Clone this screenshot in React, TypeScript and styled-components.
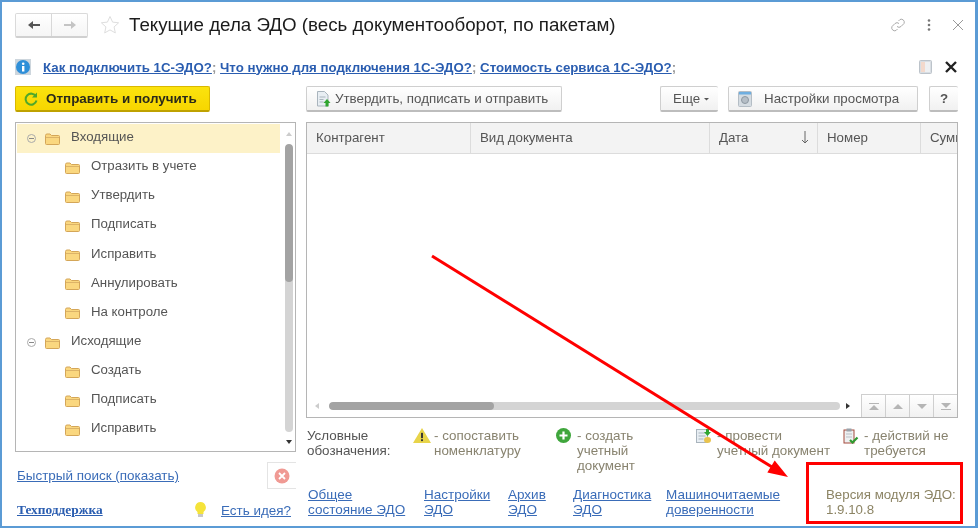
import React from 'react';
import styled, { createGlobalStyle } from 'styled-components';

const Global = createGlobalStyle`
  html, body { margin: 0; padding: 0; background: #fff; }
  body { font-family: "Liberation Sans", Arial, sans-serif; font-size: 13.3px; color: #4a4a4a; overflow: hidden; }
`;

const Frame = styled.div`
  position: relative;
  box-sizing: border-box;
  width: 978px;
  height: 528px;
  border: 2px solid #5b9bd5;
  border-right-width: 3px;
  padding: 10px 0 0 13px;
  overflow: hidden;
  background: #fff;
  filter: blur(0.3px);
`;

const TitleRow = styled.div`
  display: flex;
  align-items: center;
  height: 26px;
  width: 949px;
`;
const NavGroup = styled.div`
  display: flex;
  width: 73px;
  height: 25px;
  box-sizing: border-box;
  border: 1px solid #dadada;
  border-bottom: 2px solid #d0d0d0;
  border-radius: 2px;
  background: linear-gradient(#fff, #f5f5f5);
`;
const NavBtn = styled.div<{ $split?: boolean }>`
  flex: 1;
  display: flex;
  align-items: center;
  justify-content: center;
  border-right: ${(p) => (p.$split ? '1px solid #d8d8d8' : 'none')};
`;
const Title = styled.div`
  font-size: 18.75px;
  color: #1c1c1c;
  margin-left: 9px;
  white-space: nowrap;
`;
const StarWrap = styled.div`
  margin-left: 12px;
  display: flex;
`;
const TitleIcons = styled.div`
  margin-left: auto;
  display: flex;
  align-items: center;
  gap: 21px;
`;

const InfoRow = styled.div`
  display: flex;
  align-items: center;
  height: 20px;
  margin-top: 19px;
  width: 942px;
`;
const InfoLinks = styled.div`
  margin-left: 12px;
  font-size: 13.28px;
  font-weight: bold;
  color: #999;
  white-space: nowrap;
`;
const InfoLink = styled.a`
  color: #2a5db0;
  text-decoration: underline;
`;
const InfoRight = styled.div`
  margin-left: auto;
  display: flex;
  align-items: center;
  gap: 13px;
`;

const Columns = styled.div`
  display: flex;
  margin-top: 9px;
`;
const LeftCol = styled.div`
  width: 281px;
  margin-right: 10px;
  flex: none;
`;
const RightCol = styled.div`
  width: 652px;
  flex: none;
`;

const Button = styled.div<{ $w: number }>`
  box-sizing: border-box;
  width: ${(p) => p.$w}px;
  height: 26px;
  display: flex;
  align-items: center;
  border: 1px solid #cfcfcf;
  border-bottom: 2px solid #bdbdbd;
  border-radius: 2px;
  background: linear-gradient(#fff, #f1f1f1);
  color: #555;
  font-size: 13.35px;
  white-space: nowrap;
  flex: none;
`;
const PrimaryButton = styled(Button)`
  background: linear-gradient(#fbe30e, #f7d600);
  border-color: #d9b800;
  border-bottom-color: #bfa200;
  color: #2b2b1a;
  font-weight: bold;
  font-size: 13.45px;
  padding-left: 8px;
  gap: 8px;
`;
const Toolbar = styled.div`
  display: flex;
  height: 26px;
  margin-bottom: 10px;
`;
const ToolButton = styled(Button)<{ $ml?: number; $open?: boolean }>`
  margin-left: ${(p) => p.$ml ?? 0}px;
  padding-left: 9px;
  gap: 4px;
  border-right: ${(p) => (p.$open ? 'none' : '1px solid #cfcfcf')};
`;
const MoreButton = styled(ToolButton)`
  padding-left: 12px;
`;
const ViewButton = styled(ToolButton)`
  gap: 12px;
`;
const HelpButton = styled(ToolButton)`
  justify-content: center;
  padding-left: 0;
  font-weight: bold;
`;

const TreeBox = styled.div`
  position: relative;
  box-sizing: border-box;
  height: 330px;
  border: 1px solid #b5b5b5;
  padding: 1px 1px 0;
  overflow: hidden;
`;
const TreeRow = styled.div<{ $sel?: boolean; $child?: boolean }>`
  display: flex;
  align-items: center;
  box-sizing: border-box;
  width: 263px;
  height: 29.15px;
  padding-left: ${(p) => (p.$child ? '48px' : '10px')};
  background: ${(p) => (p.$sel ? '#fdf2c8' : 'transparent')};
  font-size: 13.25px;
  color: #555;
`;
const Collapse = styled.span`
  box-sizing: border-box;
  width: 9px;
  height: 9px;
  margin-right: 9px;
  border: 1px solid #aaa;
  border-radius: 50%;
  display: flex;
  align-items: center;
  justify-content: center;
  &::after { content: ''; width: 5px; height: 1px; background: #888; }
`;
const TreeLabel = styled.span`
  margin: -4px 0 0 11px;
`;
const VScroll = styled.div`
  position: absolute;
  top: 0;
  right: 2px;
  bottom: 0;
  width: 9px;
  display: flex;
  flex-direction: column;
  align-items: center;
`;
const ArrowUp = styled.div`
  width: 0; height: 0;
  border-left: 3px solid transparent;
  border-right: 3px solid transparent;
  border-bottom: 4px solid #ccc;
`;
const ArrowDown = styled.div`
  width: 0; height: 0;
  border-left: 3px solid transparent;
  border-right: 3px solid transparent;
  border-top: 4px solid #333;
`;
const VTrack = styled.div`
  width: 8px;
  height: 288px;
  margin: 6px 0 8px;
  border-radius: 4px;
  background: #d4d4d4;
  overflow: hidden;
`;
const VThumb = styled.div`
  height: 138px;
  background: #a3a3a3;
  border-radius: 4px;
`;
const VTop = styled.div`
  height: 8px;
  display: flex;
  align-items: center;
  margin-top: 7px;
`;

const SearchRow = styled.div`
  display: flex;
  align-items: center;
  justify-content: space-between;
  height: 27px;
  margin-top: 10px;
`;
const PlainLink = styled.a`
  color: #3a6cb8;
  text-decoration: underline;
  font-size: 13.45px;
`;
const SearchLink = styled(PlainLink)`
  margin: 0 0 1px 2px;
`;
const ClearBtn = styled.div`
  box-sizing: border-box;
  width: 29px;
  height: 27px;
  display: flex;
  align-items: center;
  justify-content: center;
  border: 1px solid #e4e4e4;
  border-right: none;
  background: #fff;
`;
const SupportRow = styled.div`
  display: flex;
  align-items: center;
  height: 20px;
  margin-top: 11px;
`;
const SupportLink = styled.a`
  font-family: "Liberation Serif", "Times New Roman", serif;
  font-weight: bold;
  font-size: 13.4px;
  color: #2a5db0;
  text-decoration: underline;
  margin-left: 2px;
`;
const IdeaGroup = styled.div`
  margin-left: auto;
  display: flex;
  align-items: center;
  gap: 14px;
  margin-right: 5px;
`;

const Grid = styled.div`
  box-sizing: border-box;
  height: 296px;
  border: 1px solid #b5b5b5;
  display: flex;
  flex-direction: column;
  overflow: hidden;
`;
const GridHead = styled.div`
  display: flex;
  height: 30px;
  flex: none;
  background: #f3f3f3;
  border-bottom: 1px solid #dcdcdc;
`;
const HeadCell = styled.div<{ $w: number }>`
  box-sizing: border-box;
  width: ${(p) => p.$w}px;
  flex: none;
  display: flex;
  align-items: center;
  justify-content: space-between;
  padding: 0 8px 2px 9px;
  border-right: 1px solid #dcdcdc;
  font-size: 13.3px;
  color: #555;
  white-space: nowrap;
  overflow: hidden;
  &:last-child { border-right: none; padding-right: 0; }
`;
const GridBody = styled.div`
  flex: 1;
`;
const GridFoot = styled.div`
  display: flex;
  align-items: center;
  height: 23px;
  flex: none;
  padding-left: 8px;
`;
const ArrowLeft = styled.div`
  width: 0; height: 0;
  border-top: 3px solid transparent;
  border-bottom: 3px solid transparent;
  border-right: 4px solid #ccc;
`;
const ArrowRight = styled.div`
  width: 0; height: 0;
  border-top: 3px solid transparent;
  border-bottom: 3px solid transparent;
  border-left: 4px solid #333;
  margin-left: 6px;
`;
const HTrack = styled.div`
  width: 511px;
  height: 8px;
  margin-left: 10px;
  border-radius: 4px;
  background: #d4d4d4;
  overflow: hidden;
`;
const HThumb = styled.div`
  width: 165px;
  height: 100%;
  background: #a3a3a3;
  border-radius: 4px;
`;
const PageBtns = styled.div`
  display: flex;
  margin-left: auto;
  height: 100%;
  box-sizing: border-box;
  border-top: 1px solid #cfcfcf;
`;
const PageBtn = styled.div`
  box-sizing: border-box;
  width: 24px;
  display: flex;
  flex-direction: column;
  align-items: center;
  justify-content: center;
  gap: 1px;
  border-left: 1px solid #cfcfcf;
  background: linear-gradient(#fff, #f1f1f1);
`;
const ArrowDownSoft = styled.div`
  width: 0; height: 0;
  border-left: 5px solid transparent;
  border-right: 5px solid transparent;
  border-top: 5px solid #b5b5b5;
`;
const ArrowUpSoft = styled.div`
  width: 0; height: 0;
  border-left: 5px solid transparent;
  border-right: 5px solid transparent;
  border-bottom: 5px solid #b5b5b5;
`;
const Dash = styled.div`
  width: 10px;
  height: 1px;
  background: #b5b5b5;
`;

const Legend = styled.div`
  display: grid;
  grid-template-columns: 106px 143px 140px 147px 1fr;
  height: 64px;
  padding: 10px 0 0 1px;
  box-sizing: border-box;
  line-height: 15px;
  font-size: 13.4px;
`;
const LegendTitle = styled.div`
  color: #555;
`;
const LegendItem = styled.div`
  display: flex;
  align-items: flex-start;
  gap: 3px;
  color: #88836f;
`;
const LegendIcon = styled.div`
  flex: none;
  width: 18px;
  display: flex;
  justify-content: flex-start;
`;

const LinksRow = styled.div`
  display: grid;
  grid-template-columns: 116px 84px 65px 93px 160px 1fr;
  padding-left: 2px;
  margin-top: 5px;
  line-height: 15px;
  font-size: 13.5px;
`;
const BottomLink = styled.a`
  color: #3a6cb8;
  text-decoration: underline;
`;
const Version = styled.div`
  color: #8c8464;
  font-size: 13.3px;
  white-space: nowrap;
`;

const RedBox = styled.div`
  position: absolute;
  left: 804px;
  top: 460px;
  width: 157px;
  height: 62px;
  box-sizing: border-box;
  border: 3px solid #f00;
`;
const ArrowOverlay = styled.svg`
  position: absolute;
  left: 0;
  top: 0;
  pointer-events: none;
`;

const Folder = () => (
  <svg width="15" height="12" viewBox="0 0 15 12">
    <path d="M.5 2.500q0-1.500 1.500-1.500h3l1.500 1.500h7q1 0 1 1v7q0 1-1 1h-12q-1 0-1-1z" fill="#fad77f" stroke="#d4a658" />
    <path d="M1 4.500h13" stroke="#dcb368" />
  </svg>
);

const ArrowIcon = ({ color, flip }: { color: string; flip?: boolean }) => (
  <svg width="14" height="12" viewBox="0 0 14 12" style={flip ? { transform: 'scaleX(-1)' } : undefined}>
    <path d="M1 6l5-4v3h7v2h-7v3z" fill={color} />
  </svg>
);

const treeItems = [
  { label: 'Входящие', sel: true },
  { label: 'Отразить в учете', child: true },
  { label: 'Утвердить', child: true },
  { label: 'Подписать', child: true },
  { label: 'Исправить', child: true },
  { label: 'Аннулировать', child: true },
  { label: 'На контроле', child: true },
  { label: 'Исходящие' },
  { label: 'Создать', child: true },
  { label: 'Подписать', child: true },
  { label: 'Исправить', child: true },
  { label: 'Аннулировать', child: true },
];

export default function App() {
  return (
    <Frame>
      <Global />
      <TitleRow>
        <NavGroup>
          <NavBtn $split><ArrowIcon color="#555" /></NavBtn>
          <NavBtn><ArrowIcon color="#c4c4c4" flip /></NavBtn>
        </NavGroup>
        <StarWrap>
          <svg width="20" height="20" viewBox="0 0 20 20">
            <path d="M10 1.500l2.600 5.600 6 .7-4.500 4.100 1.200 6-5.300-3-5.300 3 1.200-6-4.500-4.100 6-.7z" fill="#fff" stroke="#dedede" />
          </svg>
        </StarWrap>
        <Title>Текущие дела ЭДО (весь документооборот, по пакетам)</Title>
        <TitleIcons>
          <svg width="16" height="16" viewBox="0 0 16 16" fill="none" stroke="#aaa" strokeWidth="1">
            <path d="M7 9.500a3 3 0 0 0 4 0l3-3a3 3 0 0 0-4-4l-1.500 1.500" />
            <path d="M9 6.500a3 3 0 0 0-4 0l-3 3a3 3 0 0 0 4 4l1.500-1.500" />
          </svg>
          <svg width="4" height="12" viewBox="0 0 4 12" fill="#777">
            <circle cx="2" cy="1.500" r="1.300" /><circle cx="2" cy="6" r="1.300" /><circle cx="2" cy="10.500" r="1.300" />
          </svg>
          <svg width="12" height="12" viewBox="0 0 12 12" stroke="#999" strokeWidth="1">
            <path d="M1 1l10 10M11 1l-10 10" />
          </svg>
        </TitleIcons>
      </TitleRow>

      <InfoRow>
        <svg width="16" height="16" viewBox="0 0 16 16">
          <rect width="16" height="16" fill="#cdd6dd" />
          <circle cx="8" cy="8" r="7" fill="#2f8fd8" />
          <rect x="7" y="7" width="2.400" height="5.500" fill="#fff" />
          <circle cx="8.200" cy="4.700" r="1.300" fill="#fff" />
        </svg>
        <InfoLinks>
          <InfoLink>Как подключить 1С-ЭДО?</InfoLink>;{' '}
          <InfoLink>Что нужно для подключения 1С-ЭДО?</InfoLink>;{' '}
          <InfoLink>Стоимость сервиса 1С-ЭДО?</InfoLink>;
        </InfoLinks>
        <InfoRight>
          <svg width="13" height="14" viewBox="0 0 13 14">
            <rect x=".5" y=".5" width="12" height="13" rx="1" fill="#d9dee3" stroke="#bcc3ca" />
            <rect x="2" y="2" width="4" height="10" fill="#f3d9cc" />
            <rect x="6" y="2" width="5" height="10" fill="#eef0f2" />
          </svg>
          <svg width="12" height="12" viewBox="0 0 12 12" stroke="#222" strokeWidth="2.400">
            <path d="M1 1l10 10M11 1l-10 10" />
          </svg>
        </InfoRight>
      </InfoRow>

      <Columns>
        <LeftCol>
          <Toolbar>
            <PrimaryButton $w={195}>
              <svg width="14" height="14" viewBox="0 0 14 14" fill="none">
                <path d="M12 4.500a5.500 5.500 0 1 0 .5 4" stroke="#4fa82a" strokeWidth="2" />
                <path d="M13 .5v5h-5z" fill="#4fa82a" />
              </svg>
              Отправить и получить
            </PrimaryButton>
          </Toolbar>
          <TreeBox>
            {treeItems.map((t, i) => (
              <TreeRow key={i} $sel={t.sel} $child={t.child}>
                {!t.child && <Collapse />}
                <Folder />
                <TreeLabel>{t.label}</TreeLabel>
              </TreeRow>
            ))}
            <VScroll>
              <VTop><ArrowUp /></VTop>
              <VTrack><VThumb /></VTrack>
              <ArrowDown />
            </VScroll>
          </TreeBox>
          <SearchRow>
            <SearchLink>Быстрый поиск (показать)</SearchLink>
            <ClearBtn>
              <svg width="16" height="16" viewBox="0 0 16 16">
                <circle cx="8" cy="8" r="7.500" fill="#f09a94" />
                <path d="M5 5l6 6M11 5l-6 6" stroke="#fff" strokeWidth="1.800" />
              </svg>
            </ClearBtn>
          </SearchRow>
          <SupportRow>
            <SupportLink>Техподдержка</SupportLink>
            <IdeaGroup>
              <svg width="13" height="16" viewBox="0 0 13 16">
                <path d="M6.500 0a5.500 5.500 0 0 1 3 10v2h-6v-2a5.500 5.500 0 0 1 3-10z" fill="#f5e33a" />
                <rect x="4" y="12" width="5" height="3" fill="#c8c8c8" />
              </svg>
              <PlainLink>Есть идея?</PlainLink>
            </IdeaGroup>
          </SupportRow>
        </LeftCol>

        <RightCol>
          <Toolbar>
            <ToolButton $w={256}>
              <svg width="15" height="16" viewBox="0 0 15 16">
                <path d="M1.500.5h7l3.500 3.500v11h-10.500z" fill="#e8eef3" stroke="#a9b4bd" />
                <path d="M3.500 6h6M3.500 8.500h4M3.500 11h4" stroke="#a9b4bd" />
                <path d="M11 8l3.500 4h-2v3.500h-3v-3.500h-2z" fill="#2fa52f" />
              </svg>
              Утвердить, подписать и отправить
            </ToolButton>
            <MoreButton $w={58} $ml={98} $open>
              Еще
              <svg width="6" height="4" viewBox="0 0 6 4"><path d="M0 1h5l-2.500 2.500z" fill="#555" /></svg>
            </MoreButton>
            <ViewButton $w={190} $ml={10}>
              <svg width="14" height="16" viewBox="0 0 14 16">
                <rect x=".5" y=".5" width="13" height="15" rx="1" fill="#d5dce2" stroke="#b4bdc5" />
                <rect x="1" y="1" width="12" height="2.500" fill="#6eaee0" />
                <circle cx="7" cy="9" r="3.500" fill="#b5bec6" stroke="#8d98a2" />
              </svg>
              Настройки просмотра
            </ViewButton>
            <HelpButton $w={29} $ml={11} $open>?</HelpButton>
          </Toolbar>
          <Grid>
            <GridHead>
              <HeadCell $w={164}>Контрагент</HeadCell>
              <HeadCell $w={239}>Вид документа</HeadCell>
              <HeadCell $w={108}>
                Дата
                <svg width="8" height="13" viewBox="0 0 8 13" fill="none" stroke="#666">
                  <path d="M4 0v12M1 9l3 3 3-3" />
                </svg>
              </HeadCell>
              <HeadCell $w={103}>Номер</HeadCell>
              <HeadCell $w={36}>Сумма</HeadCell>
            </GridHead>
            <GridBody />
            <GridFoot>
              <ArrowLeft />
              <HTrack><HThumb /></HTrack>
              <ArrowRight />
              <PageBtns>
                <PageBtn><Dash /><ArrowUpSoft /></PageBtn>
                <PageBtn><ArrowUpSoft /></PageBtn>
                <PageBtn><ArrowDownSoft /></PageBtn>
                <PageBtn><ArrowDownSoft /><Dash /></PageBtn>
              </PageBtns>
            </GridFoot>
          </Grid>
          <Legend>
            <LegendTitle>Условные<br />обозначения:</LegendTitle>
            <LegendItem>
              <LegendIcon>
                <svg width="18" height="15" viewBox="0 0 17 14">
                  <path d="M8.500 0l8.500 14h-17z" fill="#e8d44a" />
                  <rect x="7.600" y="4.500" width="1.800" height="5" fill="#333" />
                  <rect x="7.600" y="10.500" width="1.800" height="1.800" fill="#333" />
                </svg>
              </LegendIcon>
              <span>- сопоставить<br />номенклатуру</span>
            </LegendItem>
            <LegendItem>
              <LegendIcon>
                <svg width="15" height="15" viewBox="0 0 15 15">
                  <circle cx="7.500" cy="7.500" r="7.500" fill="#3fa63c" />
                  <path d="M3.500 7.500h8M7.500 3.500v8" stroke="#fff" strokeWidth="2.200" />
                </svg>
              </LegendIcon>
              <span>- создать<br />учетный<br />документ</span>
            </LegendItem>
            <LegendItem>
              <LegendIcon>
                <svg width="17" height="17" viewBox="0 0 17 17">
                  <rect x=".5" y="1.500" width="11" height="13" fill="#e8eef3" stroke="#a9b4bd" />
                  <path d="M2.500 5h7M2.500 8h7M2.500 11h5" stroke="#a9b4bd" />
                  <path d="M8 4h2v-3h3v3h2l-3.500 4z" fill="#2fa52f" />
                  <ellipse cx="11.500" cy="12" rx="3.500" ry="3" fill="#e9c34d" />
                </svg>
              </LegendIcon>
              <span>- провести<br />учетный документ</span>
            </LegendItem>
            <LegendItem>
              <LegendIcon>
                <svg width="16" height="17" viewBox="0 0 16 17">
                  <rect x="1" y="2" width="10" height="13" fill="#eef0f2" stroke="#a34a3c" />
                  <rect x="3.500" y="0.500" width="5" height="3" fill="#9aa2aa" />
                  <path d="M3 6h6M3 9h6" stroke="#b9bfc5" />
                  <path d="M7 12l2.500 2.500 5-5" fill="none" stroke="#2f9a2f" strokeWidth="2.200" />
                </svg>
              </LegendIcon>
              <span>- действий не<br />требуется</span>
            </LegendItem>
          </Legend>
          <LinksRow>
            <BottomLink>Общее<br />состояние ЭДО</BottomLink>
            <BottomLink>Настройки<br />ЭДО</BottomLink>
            <BottomLink>Архив<br />ЭДО</BottomLink>
            <BottomLink>Диагностика<br />ЭДО</BottomLink>
            <BottomLink>Машиночитаемые<br />доверенности</BottomLink>
            <Version>Версия модуля ЭДО:<br />1.9.10.8</Version>
          </LinksRow>
        </RightCol>
      </Columns>

      <RedBox />
      <ArrowOverlay width="976" height="527" viewBox="0 0 976 527">
        <path d="M430 254L770 465" stroke="#f00" strokeWidth="3" fill="none" />
        <path d="M786 475L772.700 458.500L765.300 470.500z" fill="#f00" />
      </ArrowOverlay>
    </Frame>
  );
}
